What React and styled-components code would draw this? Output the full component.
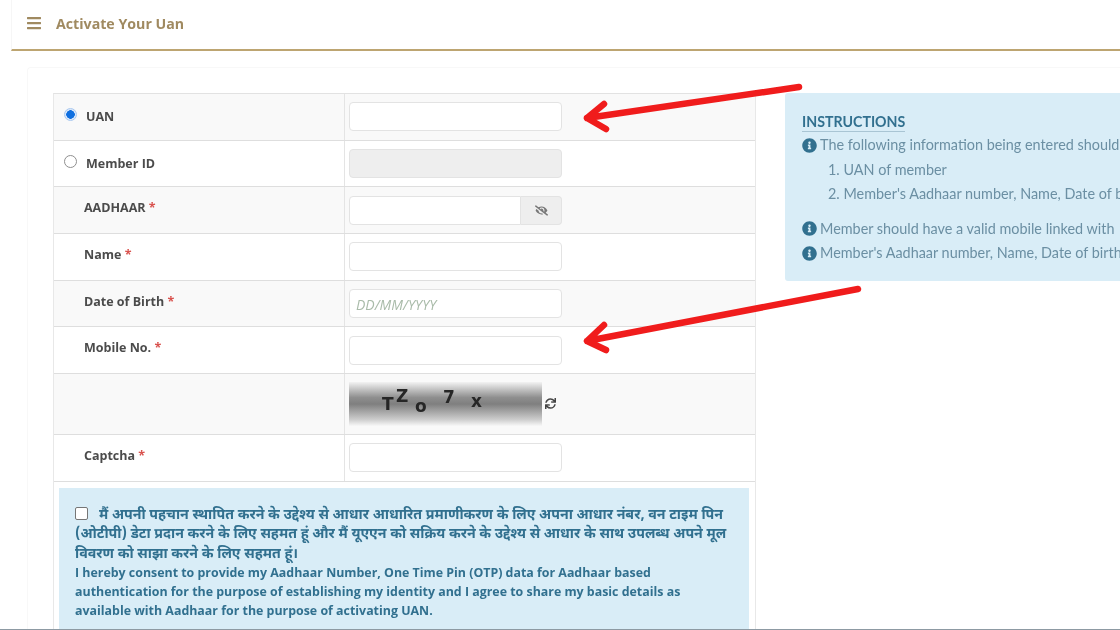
import React from "react";
import styled, { createGlobalStyle } from "styled-components";
import { FaBars, FaEyeSlash, FaInfoCircle, FaSync } from "react-icons/fa";

const GlobalStyle = createGlobalStyle`
  html, body {
    margin: 0;
    height: 630px;
    overflow: hidden;
    background: #fff;
  }
  * {
    box-sizing: border-box;
  }
`;

const Page = styled.div`
  position: relative;
  width: 1120px;
  height: 630px;
  overflow: hidden;
  padding-left: 11px;
  font-family: "Open Sans", sans-serif;
  border-bottom: 1px solid #8d9aa3;
  filter: blur(0.35px);
`;

const Header = styled.header`
  display: flex;
  align-items: center;
  gap: 16px;
  height: 51px;
  padding: 0 0 3px 14px;
  border-bottom: 2px solid #bda571;
  border-left: 1px solid #f6f6f6;
  color: #a08a60;
`;

const Title = styled.h1`
  margin: 0 0 0 -2px;
  font-size: 14.2px;
  font-weight: 700;
`;

const Main = styled.main`
  display: flex;
  align-items: flex-start;
  gap: 29px;
  margin: 16px 0 0 16px;
  padding: 25px 0 0 25px;
  border: 1px solid #f8f8f8;
  border-right: 0;
  border-radius: 4px 0 0 0;
  height: 600px;
`;

const FormTable = styled.div`
  flex: 0 0 703px;
  border-top: 1px solid #e2e2e2;
  border-left: 1px solid #e8e8e8;
  border-right: 1px solid #e8e8e8;
`;

const Row = styled.div`
  display: grid;
  grid-template-columns: 291px 1fr;
  height: ${(p) => p.$height || 46.7}px;
  background: ${(p) => (p.$shaded ? "#f9f9f9" : "#fff")};
  border-bottom: 1px solid #dedede;
`;

const LabelCell = styled.div`
  display: flex;
  align-items: ${(p) => (p.$radio ? "center" : "flex-start")};
  gap: 9px;
  padding: ${(p) => (p.$radio ? "0 0 0 10px" : "13px 0 0 30px")};
  border-right: 1px solid #e4e4e4;
  font-size: 12.5px;
  font-weight: 700;
  line-height: 16px;
  color: #4b4b4b;
`;

const Required = styled.span`
  color: #d9534f;
`;

const RadioDot = styled.span`
  flex: none;
  width: 13px;
  height: 13px;
  margin-top: -5px;
  border-radius: 50%;
  border: ${(p) => (p.$checked ? "1px solid #a9c8f0" : "1px solid #8f8f8f")};
  background: ${(p) =>
    p.$checked ? "radial-gradient(circle, #0f6fe0 0 4px, #dbe9fb 4.5px)" : "#fff"};
`;

const FieldCell = styled.div`
  display: flex;
  align-items: ${(p) => (p.$captcha ? "flex-start" : "center")};
  padding: ${(p) => (p.$captcha ? "8px 0 0 4px" : "0 0 0 4px")};
`;

const Input = styled.div`
  width: ${(p) => p.$width || 213}px;
  height: 29px;
  padding-left: 6px;
  background: ${(p) => (p.$disabled ? "#eeeeee" : "#fff")};
  border: 1px solid #e3e3e3;
  border-radius: ${(p) => (p.$joined ? "4px 0 0 4px" : "4px")};
  font-size: 14px;
  font-style: italic;
  line-height: 29px;
  color: #a9bba9;
`;

const EyeButton = styled.div`
  display: flex;
  align-items: center;
  justify-content: center;
  width: 41px;
  height: 29px;
  background: #eeeeee;
  border: 1px solid #e3e3e3;
  border-left: 0;
  border-radius: 0 4px 4px 0;
  font-size: 13px;
  color: #777;
`;

const Captcha = styled.div`
  display: flex;
  align-items: center;
  width: 193px;
  height: 44px;
  padding-left: 33px;
  background: linear-gradient(#f2f2f2 0%, #8f8f8f 35%, #7f7f7f 50%, #cccccc 85%, #f8f8f8 100%);
  font-family: "DejaVu Sans", sans-serif;
  color: #262626;
`;

const CaptchaChar = styled.span`
  width: ${(p) => p.$width}px;
  font-size: 17px;
  font-weight: 700;
  transform: translateY(${(p) => p.$shift}px);
`;

const RefreshIcon = styled(FaSync)`
  flex: none;
  margin: 16px 0 0 3px;
  font-size: 11px;
  color: #444;
`;

const ConsentCell = styled.div`
  padding: 6px 6px 0 5px;
  background: #fff;
`;

const ConsentBox = styled.div`
  height: 150px;
  padding: 18px 16px 0;
  background: #d9edf7;
  color: #31708f;
`;

const CheckBox = styled.span`
  display: inline-block;
  width: 13px;
  height: 13px;
  margin-right: 11px;
  vertical-align: -1px;
  background: #fff;
  border: 1px solid #767676;
  border-radius: 2px;
`;

const HindiText = styled.p`
  margin: 0;
  font-family: "Noto Sans Devanagari", "Lohit Devanagari", "Noto Sans", sans-serif;
  font-size: 14.2px;
  font-weight: 700;
  line-height: 19.5px;
`;

const EnglishText = styled.p`
  margin: -1px 0 0;
  max-width: 640px;
  font-size: 12.4px;
  font-weight: 700;
  line-height: 19px;
`;

const InstructionPanel = styled.aside`
  flex: none;
  width: 420px;
  height: 188px;
  padding: 20px 17px;
  background: #d9edf7;
  border-radius: 3px;
  font-family: Lato, sans-serif;
  font-size: 14.4px;
  line-height: 24.5px;
  color: #6b8fa3;
  white-space: nowrap;
`;

const PanelTitle = styled.div`
  width: max-content;
  font-size: 14.2px;
  font-weight: 700;
  line-height: 18px;
  margin-bottom: 1px;
  color: #31708f;
  border-bottom: 1px solid #a9c5d4;
`;

const InfoLine = styled.div`
  display: flex;
  align-items: center;
  gap: 3px;
  margin-top: ${(p) => p.$gap || 0}px;
`;

const InfoIcon = styled(FaInfoCircle)`
  flex: none;
  font-size: 15px;
  color: #31708f;
`;

const NumberedLine = styled.div`
  padding-left: 26px;
`;

const ArrowOverlay = styled.svg`
  position: absolute;
  top: 0;
  left: 0;
  pointer-events: none;
`;

const rows = [
  { label: "AADHAAR", eye: true, shaded: true },
  { label: "Name" },
  { label: "Date of Birth", placeholder: "DD/MM/YYYY", shaded: true },
  { label: "Mobile No." },
];

const captchaChars = [
  { c: "T", width: 14, shift: 0 },
  { c: "Z", width: 19, shift: -8 },
  { c: "o", width: 28, shift: 2 },
  { c: "7", width: 28, shift: -7 },
  { c: "x", width: 14, shift: -3 },
];

const Arrow = ({ d }) => (
  <path d={d} fill="none" stroke="#f01c1c" strokeWidth="6.5" strokeLinecap="round" strokeLinejoin="round" />
);

const App = () => {
  return (
    <Page>
      <GlobalStyle />
      <Header>
        <FaBars size={16} />
        <Title>Activate Your Uan</Title>
      </Header>
      <Main>
        <FormTable>
          <Row $shaded>
            <LabelCell $radio>
              <RadioDot $checked />
              UAN
            </LabelCell>
            <FieldCell>
              <Input />
            </FieldCell>
          </Row>
          <Row>
            <LabelCell $radio>
              <RadioDot />
              Member ID
            </LabelCell>
            <FieldCell>
              <Input $disabled />
            </FieldCell>
          </Row>
          {rows.map((row) => (
            <Row key={row.label} $shaded={row.shaded}>
              <LabelCell>
                <span>
                  {row.label} <Required>*</Required>
                </span>
              </LabelCell>
              <FieldCell>
                <Input $joined={row.eye} $width={row.eye ? 172 : 213}>
                  {row.placeholder}
                </Input>
                {row.eye && (
                  <EyeButton>
                    <FaEyeSlash />
                  </EyeButton>
                )}
              </FieldCell>
            </Row>
          ))}
          <Row $shaded $height={61}>
            <LabelCell />
            <FieldCell $captcha>
              <Captcha>
                {captchaChars.map((item) => (
                  <CaptchaChar key={item.c} $width={item.width} $shift={item.shift}>
                    {item.c}
                  </CaptchaChar>
                ))}
              </Captcha>
              <RefreshIcon />
            </FieldCell>
          </Row>
          <Row>
            <LabelCell>
              <span>
                Captcha <Required>*</Required>
              </span>
            </LabelCell>
            <FieldCell>
              <Input />
            </FieldCell>
          </Row>
          <ConsentCell>
            <ConsentBox>
              <HindiText>
                <CheckBox />
                मैं अपनी पहचान स्थापित करने के उद्देश्य से आधार आधारित प्रमाणीकरण के लिए अपना आधार नंबर, वन टाइम पिन (ओटीपी) डेटा प्रदान करने के लिए सहमत हूं और मैं यूएएन को सक्रिय करने के उद्देश्य से आधार के साथ उपलब्ध अपने मूल विवरण को साझा करने के लिए सहमत हूं।
              </HindiText>
              <EnglishText>
                I hereby consent to provide my Aadhaar Number, One Time Pin (OTP) data for Aadhaar based authentication for the purpose of establishing my identity and I agree to share my basic details as available with Aadhaar for the purpose of activating UAN.
              </EnglishText>
            </ConsentBox>
          </ConsentCell>
        </FormTable>
        <InstructionPanel>
          <PanelTitle>INSTRUCTIONS</PanelTitle>
          <InfoLine>
            <InfoIcon />
            The following information being entered should
          </InfoLine>
          <NumberedLine>1. UAN of member</NumberedLine>
          <NumberedLine>2. Member's Aadhaar number, Name, Date of birth</NumberedLine>
          <InfoLine $gap={10}>
            <InfoIcon />
            Member should have a valid mobile linked with
          </InfoLine>
          <InfoLine>
            <InfoIcon />
            Member's Aadhaar number, Name, Date of birth
          </InfoLine>
        </InstructionPanel>
      </Main>
      <ArrowOverlay width="1120" height="630" viewBox="0 0 1120 630">
        <Arrow d="M799 87 L587 118 M604 104 L587 118 L606 129" />
        <Arrow d="M858 289 L587 341 M604 325 L587 341 L606 350" />
      </ArrowOverlay>
    </Page>
  );
};

export default App;
